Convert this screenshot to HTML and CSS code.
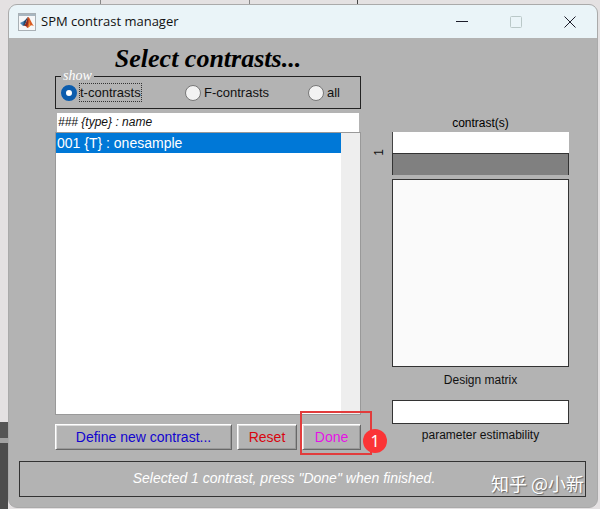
FILE: index.html
```html
<!DOCTYPE html>
<html lang="en">
<head>
<meta charset="utf-8">
<title>SPM contrast manager</title>
<link rel="stylesheet" href="styles.css">
</head>
<body>
<div class="window">
  <header class="titlebar">
    <svg class="app-icon" viewBox="0 0 18 18" aria-hidden="true">
      <rect x=".5" y=".5" width="17" height="17" fill="#f6f7f8" stroke="#a9b0b5"/>
      <path d="M1 1h16v2H1z" fill="#a8b6c0"/>
      <path d="M2 10l4-2 2 1-3 4z" fill="#4d86b4"/>
      <path d="M6 8c2-1 3-4 4-4L7 12l-2 1z" fill="#244a70"/>
      <path d="M10 4c2 0 3 6 6 9-2-1-3-1-4 0-1 1-2 2-3 2 0-2-1-2-3-2 2-2 3-6 4-9z" fill="#d95b23"/>
      <path d="M10 4c1 3 0 7-1 11 0-2-1-2-3-2 2-2 3-6 4-9z" fill="#8d2b20"/>
      <path d="M10.500 5c1 3 1 6 0 9 1-1 1-1 2-1z" fill="#f4a13c"/>
    </svg>
    <h1 class="title">SPM contrast manager</h1>
    <div class="controls">
      <button class="control" type="button" aria-label="Minimize"><svg viewBox="0 0 12 12"><path d="M0 5.500h12"/></svg></button>
      <button class="control disabled" type="button" aria-label="Maximize" disabled><svg viewBox="0 0 12 12"><rect x=".5" y=".5" width="11" height="11" rx="1"/></svg></button>
      <button class="control" type="button" aria-label="Close"><svg viewBox="0 0 12 12"><path d="M.5.5l11 11M11.500.5l-11 11"/></svg></button>
    </div>
  </header>

  <main class="content">
    <div class="columns">
      <section class="selector">
        <h2 class="heading">Select contrasts...</h2>
        <fieldset class="show">
          <legend class="show-legend">show</legend>
          <label class="choice"><input type="radio" name="show" checked><span class="focused">t-contrasts</span></label>
          <label class="choice"><input type="radio" name="show"><span>F-contrasts</span></label>
          <label class="choice"><input type="radio" name="show"><span>all</span></label>
        </fieldset>
        <label class="list-header" for="contrast-list">### {type} : name</label>
        <select class="list" id="contrast-list" size="2">
          <option selected>001 {T} : onesample</option>
        </select>
        <div class="actions">
          <button class="action define" type="button">Define new contrast...</button>
          <button class="action reset" type="button">Reset</button>
          <div class="done-wrap">
            <button class="action done" type="button">Done</button>
            <div class="callout"><span class="badge">1</span></div>
          </div>
        </div>
      </section>

      <section class="preview">
        <h3 class="caption contrasts">contrast(s)</h3>
        <div class="plot">
          <span class="tick">1</span>
          <div class="plot-top"></div>
          <div class="plot-bar"></div>
        </div>
        <div class="matrix"></div>
        <p class="caption design">Design matrix</p>
        <div class="estimability"></div>
        <p class="caption estimate">parameter estimability</p>
      </section>
    </div>
    <footer class="status">
      <p class="message">Selected 1 contrast, press "Done" when finished.</p>
      <span class="watermark">知乎 @小新</span>
    </footer>
  </main>
</div>
</body>
</html>
```
FILE: styles.css
```css
* {
  box-sizing: border-box;
}

html {
  min-height: 100%;
  background:
    linear-gradient(#888, #888) 100px 0 / 1px 4px no-repeat,
    linear-gradient(#888, #888) 249px 0 / 1px 4px no-repeat,
    linear-gradient(#444, #444) 357px 0 / 1px 4px no-repeat,
    linear-gradient(#e4e1e2 0 422px, #555 422px 438px, #a2a2a2 438px 443px, #4c4c4c 443px) 0 0 / 8px 100% no-repeat,
    #e4e1e2;
}

body {
  margin: 0;
  padding: 4px 2px 1px 8px;
  color: #111;
  font-family: "Liberation Sans", Arial, sans-serif;
  font-size: 13px;
}

h1, h2, h3, p {
  margin: 0;
  font-weight: 400;
}

button, select {
  font-family: inherit;
}

.window {
  overflow: hidden;
  border: 1px solid #aaa;
  border-radius: 9px;
  background: #b3b3b3;
}

.titlebar {
  display: flex;
  align-items: center;
  height: 33px;
  padding-left: 9px;
  background: #eaf4f8;
}

.app-icon {
  width: 18px;
  height: 18px;
}

.title {
  flex: 1;
  margin-left: 5px;
  padding-bottom: 2px;
  font-family: "Open Sans", "Noto Sans", sans-serif;
  font-size: 13px;
  line-height: 28px;
}

.controls {
  display: flex;
}

.control {
  display: grid;
  place-items: center;
  width: 54px;
  height: 31px;
  padding: 0;
  border: 0;
  background: none;
}

.control svg {
  width: 12px;
  height: 12px;
  fill: none;
  stroke: #1c1c2a;
  stroke-width: 1;
}

.disabled svg {
  stroke: #bac8c8;
}

.content {
  padding: 0 11px 10px 10px;
}

.columns {
  display: grid;
  grid-template-columns: 306fr 177fr;
  column-gap: 31px;
  padding: 0 17px 0 36px;
}

.selector,
.preview {
  display: flex;
  flex-direction: column;
}

.heading {
  height: 38px;
  text-align: center;
  color: #000;
  font: italic 700 26px/42px "Liberation Serif", "Times New Roman", serif;
}

.show {
  position: relative;
  display: grid;
  grid-template-columns: 124px 123px 1fr;
  align-content: center;
  height: 33px;
  margin: 0;
  padding: 0 0 0 5px;
  border: 1px solid #222;
}

.show-legend {
  position: absolute;
  top: -9px;
  left: 5px;
  padding: 0 2px;
  background: linear-gradient(#b3b3b3 0 12px, transparent 12px);
  color: #fff;
  font: italic 14px/16px "Liberation Serif", "Times New Roman", serif;
}

.choice {
  display: flex;
  align-items: center;
  height: 31px;
  gap: 3px;
}

.choice input {
  appearance: none;
  width: 16px;
  height: 16px;
  margin: 0;
  border: 1px solid #777;
  border-radius: 50%;
  background: #f3f3f3;
}

.choice input:checked {
  border: 5px solid #0b5cad;
  background: #fff;
}

.focused {
  outline: 1px dotted #333;
  line-height: 17px;
}

.list-header {
  height: 19px;
  margin: 4px 2px 0;
  padding-left: 1px;
  background: #fff;
  font-size: 12px;
  font-style: italic;
  line-height: 18px;
}

.list {
  height: 283px;
  padding: 0;
  overflow: hidden;
  border: 0;
  border-right: 20px solid #eee;
  border-radius: 0;
  outline: 1px solid #999;
  outline-offset: -1px;
  background: #fff;
  font-size: 14px;
}

.list option {
  height: 20px;
  margin: 1px 0 0 1px;
  padding: 2px 0 0 1px;
  background: linear-gradient(#0078d7, #0078d7);
  -webkit-text-fill-color: #fff;
}

.actions {
  display: grid;
  grid-template-columns: 177fr 60fr 59fr;
  gap: 5px;
  margin-top: 9px;
}

.action {
  width: 100%;
  height: 26px;
  padding: 0;
  border: 1px solid;
  border-color: #fff #686868 #686868 #fff;
  border-radius: 0;
  background: #b3b3b3;
  box-shadow: inset 1px 1px #ddd, inset -1px -1px #999;
  font-size: 14px;
}

.define {
  color: #1205cf;
}

.reset {
  color: #d8050f;
}

.done {
  color: #e512e5;
}

.done-wrap {
  position: relative;
}

.callout {
  position: absolute;
  inset: -13px -11px -5px -2px;
  border: 2px solid #e23c3c;
  pointer-events: none;
}

.badge {
  position: absolute;
  right: -17px;
  bottom: 0;
  width: 24px;
  height: 24px;
  border-radius: 50%;
  background: #fb3436;
  color: #fff;
  font: 16px/24px "Noto Sans", sans-serif;
  text-align: center;
}

.caption {
  font-size: 12px;
  line-height: 18px;
  text-align: center;
}

.contrasts {
  margin-top: 76px;
  color: #000;
}

.plot {
  position: relative;
}

.plot-top {
  height: 21px;
  border-left: 1px solid #444;
  background: #fff;
}

.plot-bar {
  height: 22px;
  border: 1px solid #333;
  border-bottom: 0;
  background: #808080;
}

.tick {
  position: absolute;
  top: 17px;
  left: -20px;
  font-size: 12px;
  line-height: 15px;
  writing-mode: vertical-rl;
  transform: rotate(180deg);
}

.matrix {
  height: 188px;
  margin-top: 4px;
  border: 1px solid #333;
  background: #fafafa;
}

.design {
  margin-top: 4px;
}

.estimability {
  height: 24px;
  margin-top: 11px;
  border: 1px solid #333;
  background: #fff;
}

.estimate {
  margin-top: 2px;
}

.status {
  position: relative;
  height: 36px;
  margin-top: 11px;
  border: 1px solid #333;
}

.message {
  padding-right: 37px;
  color: #fff;
  font-size: 14px;
  font-style: italic;
  line-height: 32px;
  text-align: center;
}

.watermark {
  position: absolute;
  right: 1px;
  bottom: 0;
  color: #fff;
  font: 18px/26px "Noto Sans CJK SC", sans-serif;
  text-shadow: 1px 1px 1px #666;
}
```
